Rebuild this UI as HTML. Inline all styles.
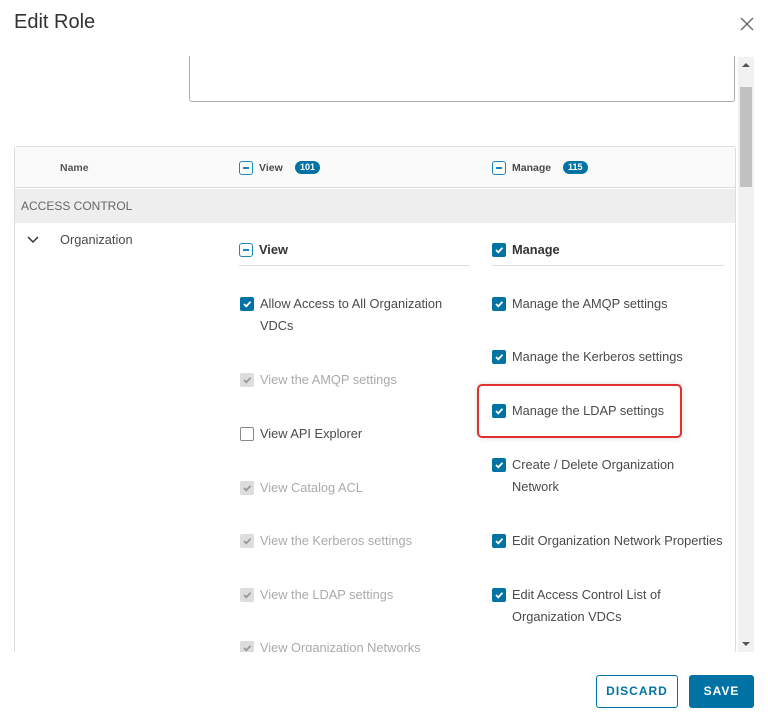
<!DOCTYPE html><html><head><style>
*{box-sizing:border-box;margin:0;padding:0}
body{width:768px;height:717px;background:#fff;font-family:"Liberation Sans",sans-serif;color:#4a4a4a;position:relative;overflow:hidden}
.a{position:absolute}
.t{font-size:12.8px;white-space:nowrap;line-height:22px}
.cb{position:absolute;width:14px;height:14px;border-radius:2px;background:#0072a3}
.cb svg{position:absolute;left:2px;top:2px}
.dis{background:#ddd}
.emp{background:#fff;border:1px solid #888}
.min{background:#fff;border:1px solid #1a85c0;border-radius:3px}
.min:after{content:"";position:absolute;left:3px;top:5px;width:6px;height:1.5px;background:#1a85c0}
.badge{position:absolute;background:#0072a3;color:#fff;font-size:9px;font-weight:bold;border-radius:7px;height:13px;line-height:13px;padding:0 5px}
</style></head><body>
<div class="a" style="left:14px;top:11px;font-size:20px;color:#333">Edit Role</div>
<svg class="a" style="left:740px;top:17px" width="14" height="14"><path d="M1 1L13 13M13 1L1 13" stroke="#666" stroke-width="1.4"/></svg>
<div class="a" style="left:189px;top:56px;width:546px;height:46px;border:1px solid #aaa;border-top:none;border-radius:0 0 3px 3px"></div>
<div class="a" style="left:738px;top:57px;width:16px;height:595px;background:#f1f1f1"></div>
<div class="a" style="left:740px;top:87px;width:12px;height:100px;background:#c1c1c1"></div>
<div class="a" style="left:742px;top:63px;border:4px solid transparent;border-bottom:4px solid #555;border-top:none"></div>
<div class="a" style="left:742px;top:642px;border:4px solid transparent;border-top:4px solid #555;border-bottom:none"></div>
<div class="a" style="left:14px;top:146px;width:722px;height:506px;border:1px solid #ddd;border-bottom:none;border-radius:3px 3px 0 0"></div>
<div class="a" style="left:15px;top:147px;width:720px;height:41px;background:#fafafa;border-bottom:1px solid #ddd"></div>
<div class="a" style="left:15px;top:189px;width:720px;height:34px;background:#eee"></div>
<div class="a t" style="left:60px;top:157px;font-size:10.5px;font-weight:bold;color:#555">Name</div>
<div class="cb min" style="left:239px;top:161px"></div>
<div class="a t" style="left:259px;top:157px;font-size:10.5px;font-weight:bold">View</div>
<div class="badge" style="left:295px;top:161px">101</div>
<div class="cb min" style="left:492px;top:161px"></div>
<div class="a t" style="left:512px;top:157px;font-size:10.5px;font-weight:bold">Manage</div>
<div class="badge" style="left:563px;top:161px">115</div>
<div class="a t" style="left:21px;top:195px;font-size:12px;color:#666">ACCESS CONTROL</div>
<svg class="a" style="left:27px;top:236px" width="12" height="8"><path d="M1 1L6 6L11 1" stroke="#333" stroke-width="1.5" fill="none"/></svg>
<div class="a t" style="left:60px;top:229px">Organization</div>
<div class="cb min" style="left:239px;top:243px"></div>
<div class="a t" style="left:259px;top:239px;font-weight:bold;color:#333">View</div>
<div class="a" style="left:239px;top:265px;width:231px;height:1px;background:#ddd"></div>
<div class="cb" style="left:492px;top:243px"><svg width="10" height="10"><path d="M2 5L4.3 7.3L8.5 2.8" stroke="#fff" stroke-width="1.8" fill="none"/></svg></div>
<div class="a t" style="left:512px;top:239px;font-weight:bold;color:#333">Manage</div>
<div class="a" style="left:492px;top:265px;width:232px;height:1px;background:#ddd"></div>
<div class="a" style="left:477px;top:384px;width:205px;height:54px;border:2px solid #e03030;border-radius:5px;box-shadow:0 0 6px rgba(0,0,0,.15)"></div>

<div class="cb" style="left:240px;top:297px"><svg width="10" height="10"><path d="M2 5L4.3 7.3L8.5 2.8" stroke="#fff" stroke-width="1.8" fill="none"/></svg></div>
<div class="a t" style="left:260px;top:293px">Allow Access to All Organization<br>VDCs</div>
<div class="cb dis" style="left:240px;top:373px"><svg width="10" height="10"><path d="M2 5L4.3 7.3L8.5 2.8" stroke="#999" stroke-width="1.8" fill="none"/></svg></div>
<div class="a t" style="left:260px;top:369px;color:#aaa">View the AMQP settings</div>
<div class="cb emp" style="left:240px;top:427px"></div>
<div class="a t" style="left:260px;top:423px">View API Explorer</div>
<div class="cb dis" style="left:240px;top:481px"><svg width="10" height="10"><path d="M2 5L4.3 7.3L8.5 2.8" stroke="#999" stroke-width="1.8" fill="none"/></svg></div>
<div class="a t" style="left:260px;top:477px;color:#aaa">View Catalog ACL</div>
<div class="cb dis" style="left:240px;top:534px"><svg width="10" height="10"><path d="M2 5L4.3 7.3L8.5 2.8" stroke="#999" stroke-width="1.8" fill="none"/></svg></div>
<div class="a t" style="left:260px;top:530px;color:#aaa">View the Kerberos settings</div>
<div class="cb dis" style="left:240px;top:588px"><svg width="10" height="10"><path d="M2 5L4.3 7.3L8.5 2.8" stroke="#999" stroke-width="1.8" fill="none"/></svg></div>
<div class="a t" style="left:260px;top:584px;color:#aaa">View the LDAP settings</div>
<div class="a" style="left:0;top:0;width:736px;height:652px;overflow:hidden;pointer-events:none">
<div class="cb dis" style="left:240px;top:641px"><svg width="10" height="10"><path d="M2 5L4.3 7.3L8.5 2.8" stroke="#999" stroke-width="1.8" fill="none"/></svg></div>
<div class="a t" style="left:260px;top:637px;color:#aaa">View Organization Networks</div>
</div>

<div class="cb" style="left:492px;top:297px"><svg width="10" height="10"><path d="M2 5L4.3 7.3L8.5 2.8" stroke="#fff" stroke-width="1.8" fill="none"/></svg></div>
<div class="a t" style="left:512px;top:293px">Manage the AMQP settings</div>
<div class="cb" style="left:492px;top:350px"><svg width="10" height="10"><path d="M2 5L4.3 7.3L8.5 2.8" stroke="#fff" stroke-width="1.8" fill="none"/></svg></div>
<div class="a t" style="left:512px;top:346px">Manage the Kerberos settings</div>
<div class="cb" style="left:492px;top:404px"><svg width="10" height="10"><path d="M2 5L4.3 7.3L8.5 2.8" stroke="#fff" stroke-width="1.8" fill="none"/></svg></div>
<div class="a t" style="left:512px;top:400px">Manage the LDAP settings</div>
<div class="cb" style="left:492px;top:458px"><svg width="10" height="10"><path d="M2 5L4.3 7.3L8.5 2.8" stroke="#fff" stroke-width="1.8" fill="none"/></svg></div>
<div class="a t" style="left:512px;top:454px">Create / Delete Organization<br>Network</div>
<div class="cb" style="left:492px;top:534px"><svg width="10" height="10"><path d="M2 5L4.3 7.3L8.5 2.8" stroke="#fff" stroke-width="1.8" fill="none"/></svg></div>
<div class="a t" style="left:512px;top:530px">Edit Organization Network Properties</div>
<div class="cb" style="left:492px;top:588px"><svg width="10" height="10"><path d="M2 5L4.3 7.3L8.5 2.8" stroke="#fff" stroke-width="1.8" fill="none"/></svg></div>
<div class="a t" style="left:512px;top:584px">Edit Access Control List of<br>Organization VDCs</div>

<div class="a" style="left:596px;top:675px;width:82px;height:33px;border:1px solid #0072a3;border-radius:3px;color:#0072a3;font-size:12px;font-weight:bold;letter-spacing:1px;text-align:center;line-height:31px">DISCARD</div>
<div class="a" style="left:689px;top:675px;width:65px;height:33px;background:#0072a3;border-radius:3px;color:#fff;font-size:12px;font-weight:bold;letter-spacing:1px;text-align:center;line-height:33px">SAVE</div>
</body></html>
